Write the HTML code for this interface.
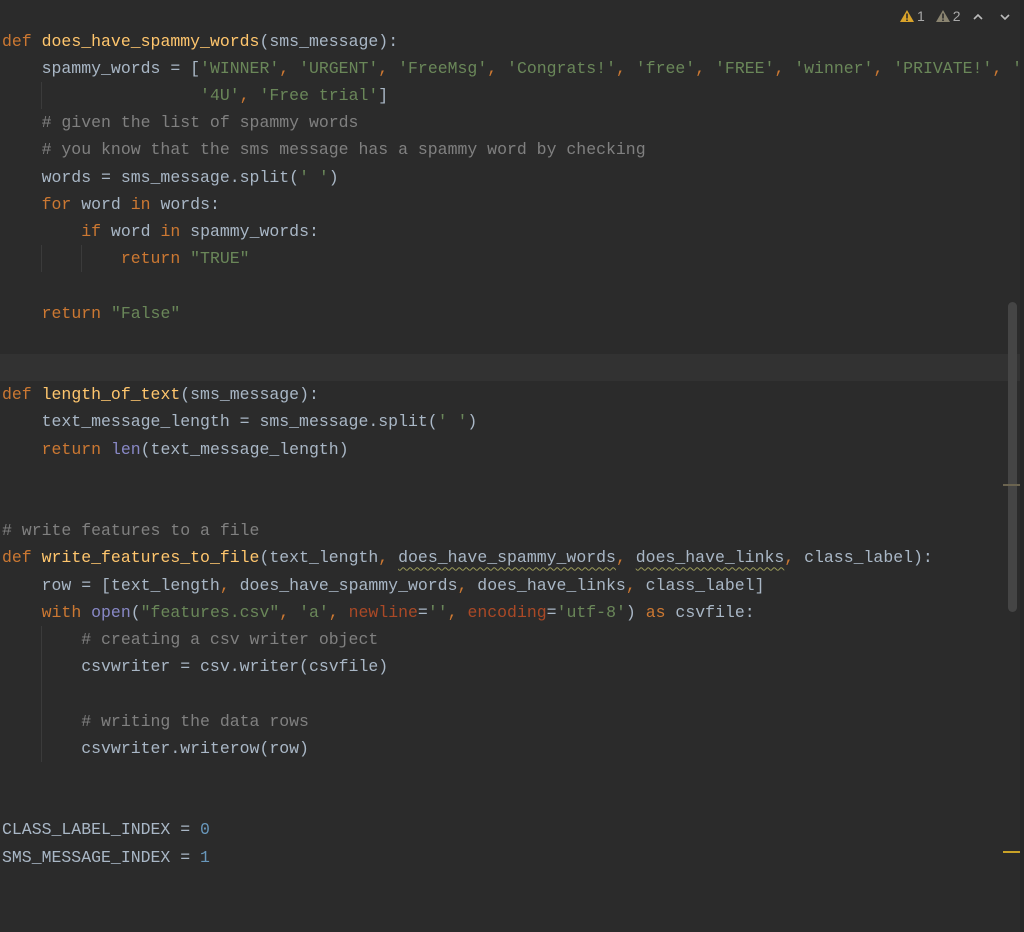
<!DOCTYPE html>
<html><head><meta charset="utf-8"><style>
html,body{margin:0;padding:0;background:#2b2b2b;width:1024px;height:932px;overflow:hidden}
body{position:relative;font-family:"Liberation Mono",monospace;font-size:16.5px;color:#a9b7c6}
.l{position:absolute;left:2px;height:27.2px;line-height:27.2px;white-space:pre}
.k{color:#cc7832}.f{color:#ffc66d}.s{color:#6a8759}.c{color:#808080}.n{color:#6897bb}.b{color:#8888c6}.p{color:#aa4926}
.w{text-decoration:underline wavy #9b9b5a;text-decoration-thickness:1px;text-underline-offset:4px}
.hl{position:absolute;left:0;top:354px;width:1020px;height:27px;background:#323232}
.g{position:absolute;width:1px;background:#3b3b3b}
</style></head><body>
<div class="hl"></div>
<div style="position:absolute;left:1020px;top:0;width:4px;height:932px;background:#262626"></div>
<div style="position:absolute;left:1008px;top:302px;width:9px;height:310px;border-radius:5px;background:#454545"></div>
<div style="position:absolute;left:1003px;top:484px;width:17px;height:2px;background:#6b6450"></div>
<div style="position:absolute;left:1003px;top:851px;width:17px;height:2px;background:#c9a227"></div>
<div style="position:absolute;left:900px;top:7px;height:18px;line-height:18px;font-family:'Liberation Sans',sans-serif;font-size:14px;color:#a9a9a9;white-space:nowrap"><svg width="14" height="12" style="vertical-align:-1px"><path d="M7 0L14 12H0Z" fill="#d9a32a"/><rect x="6.2" y="3.5" width="1.6" height="5" fill="#2b2b2b"/><rect x="6.2" y="9.5" width="1.6" height="1.5" fill="#2b2b2b"/></svg><span style="margin-left:3px">1</span><svg width="14" height="12" style="vertical-align:-1px;margin-left:11px"><path d="M7 0L14 12H0Z" fill="#8a8470"/><rect x="6.2" y="3.5" width="1.6" height="5" fill="#2b2b2b"/><rect x="6.2" y="9.5" width="1.6" height="1.5" fill="#2b2b2b"/></svg><span style="margin-left:3px">2</span></div>
<svg style="position:absolute;left:972px;top:10px" width="40" height="12"><path d="M2 9L6 5L10 9" stroke="#bbb" stroke-width="1.6" fill="none"/><path d="M29 5L33 9L37 5" stroke="#bbb" stroke-width="1.6" fill="none"/></svg>
<div class="g" style="left:41px;top:82px;height:27px"></div>
<div class="g" style="left:41px;top:245px;height:27px"></div>
<div class="g" style="left:81px;top:245px;height:27px"></div>
<div class="g" style="left:41px;top:626px;height:136px"></div>
<div class="l" style="top:27.5px"><span class="k">def</span> <span class="f">does_have_spammy_words</span>(sms_message):</div>
<div class="l" style="top:54.7px">    spammy_words = [<span class="s">'WINNER'</span><span class="k">,</span> <span class="s">'URGENT'</span><span class="k">,</span> <span class="s">'FreeMsg'</span><span class="k">,</span> <span class="s">'Congrats!'</span><span class="k">,</span> <span class="s">'free'</span><span class="k">,</span> <span class="s">'FREE'</span><span class="k">,</span> <span class="s">'winner'</span><span class="k">,</span> <span class="s">'PRIVATE!'</span><span class="k">,</span> <span class="s">'</span></div>
<div class="l" style="top:81.9px">                    <span class="s">'4U'</span><span class="k">,</span> <span class="s">'Free trial'</span>]</div>
<div class="l c" style="top:109.1px">    # given the list of spammy words</div>
<div class="l c" style="top:136.3px">    # you know that the sms message has a spammy word by checking</div>
<div class="l" style="top:163.5px">    words = sms_message.split(<span class="s">' '</span>)</div>
<div class="l" style="top:190.7px">    <span class="k">for</span> word <span class="k">in</span> words:</div>
<div class="l" style="top:217.9px">        <span class="k">if</span> word <span class="k">in</span> spammy_words:</div>
<div class="l" style="top:245.1px">            <span class="k">return</span> <span class="s">"TRUE"</span></div>
<div class="l" style="top:299.5px">    <span class="k">return</span> <span class="s">"False"</span></div>
<div class="l" style="top:381.1px"><span class="k">def</span> <span class="f">length_of_text</span>(sms_message):</div>
<div class="l" style="top:408.3px">    text_message_length = sms_message.split(<span class="s">' '</span>)</div>
<div class="l" style="top:435.5px">    <span class="k">return</span> <span class="b">len</span>(text_message_length)</div>
<div class="l c" style="top:517.1px"># write features to a file</div>
<div class="l" style="top:544.3px"><span class="k">def</span> <span class="f">write_features_to_file</span>(text_length<span class="k">,</span> <span class="w">does_have_spammy_words</span><span class="k">,</span> <span class="w">does_have_links</span><span class="k">,</span> class_label):</div>
<div class="l" style="top:571.5px">    row = [text_length<span class="k">,</span> does_have_spammy_words<span class="k">,</span> does_have_links<span class="k">,</span> class_label]</div>
<div class="l" style="top:598.7px">    <span class="k">with</span> <span class="b">open</span>(<span class="s">"features.csv"</span><span class="k">,</span> <span class="s">'a'</span><span class="k">,</span> <span class="p">newline</span>=<span class="s">''</span><span class="k">,</span> <span class="p">encoding</span>=<span class="s">'utf-8'</span>) <span class="k">as</span> csvfile:</div>
<div class="l c" style="top:625.9px">        # creating a csv writer object</div>
<div class="l" style="top:653.1px">        csvwriter = csv.writer(csvfile)</div>
<div class="l c" style="top:707.5px">        # writing the data rows</div>
<div class="l" style="top:734.7px">        csvwriter.writerow(row)</div>
<div class="l" style="top:816.3px">CLASS_LABEL_INDEX = <span class="n">0</span></div>
<div class="l" style="top:843.5px">SMS_MESSAGE_INDEX = <span class="n">1</span></div>
</body></html>
